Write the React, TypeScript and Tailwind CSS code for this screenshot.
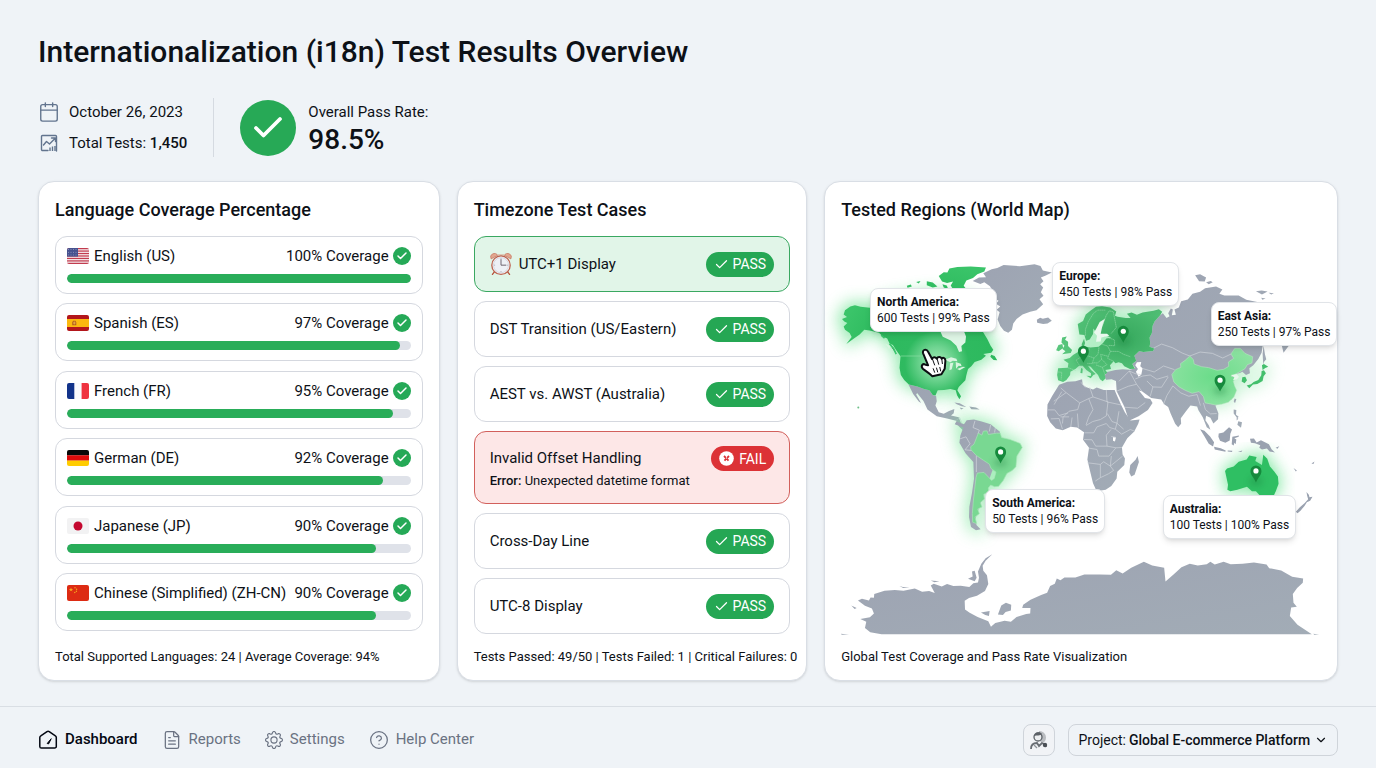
import React from 'react';
import { Calendar, Check, ChevronDown, CircleHelp, FileText } from 'lucide-react';
import { BsGear } from 'react-icons/bs';

interface Language {
  name: string;
  code: string;
  coverage: number;
}

interface TestCase {
  name: string;
  passed: boolean;
  active?: boolean;
  error?: string;
}

interface Region {
  name: string;
  stats: string;
  position: string;
}

const LANGUAGES: Language[] = [
  { name: 'English (US)', code: 'us', coverage: 100 },
  { name: 'Spanish (ES)', code: 'es', coverage: 97 },
  { name: 'French (FR)', code: 'fr', coverage: 95 },
  { name: 'German (DE)', code: 'de', coverage: 92 },
  { name: 'Japanese (JP)', code: 'jp', coverage: 90 },
  { name: 'Chinese (Simplified) (ZH-CN)', code: 'cn', coverage: 90 },
];

const TEST_CASES: TestCase[] = [
  { name: 'UTC+1 Display', passed: true, active: true },
  { name: 'DST Transition (US/Eastern)', passed: true },
  { name: 'AEST vs. AWST (Australia)', passed: true },
  { name: 'Invalid Offset Handling', passed: false, error: 'Unexpected datetime format' },
  { name: 'Cross-Day Line', passed: true },
  { name: 'UTC-8 Display', passed: true },
];

const REGIONS: Region[] = [
  { name: 'North America:', stats: '600 Tests | 99% Pass', position: 'left-[6%] top-[13%]' },
  { name: 'Europe:', stats: '450 Tests | 98% Pass', position: 'left-[44%] top-[6.5%]' },
  { name: 'East Asia:', stats: '250 Tests | 97% Pass', position: 'left-[77%] top-[16.5%]' },
  { name: 'South America:', stats: '50 Tests | 96% Pass', position: 'left-[30%] top-[63.5%]' },
  { name: 'Australia:', stats: '100 Tests | 100% Pass', position: 'left-[67%] top-[65%]' },
];

const Flag: React.FC<{ code: string }> = ({ code }) => (
  <svg viewBox="0 0 22 16" className="h-4 w-[22px] shrink-0 overflow-hidden rounded-xs" aria-hidden="true">
    {code === 'us' && (
      <>
        <rect width="22" height="16" fill="#f6eef0" />
        {[0, 1, 2, 3, 4, 5, 6].map((i) => (
          <rect key={i} y={i * 2.46} width="22" height="1.23" fill="#c23b4e" />
        ))}
        <rect width="11" height="8.6" fill="#46528f" />
        {[1.5, 4.2, 6.9].map((y) =>
          [1.5, 4, 6.5, 9].map((x) => <circle key={`${x}-${y}`} cx={x} cy={y} r="0.45" fill="#c9cde4" />)
        )}
      </>
    )}
    {code === 'es' && (
      <>
        <rect width="22" height="16" fill="#b3161b" />
        <rect y="4" width="22" height="8" fill="#fbb80f" />
        <path d="M5.200 10.300V7.500l.8-1.800h2.500l.8 1.800v2.800z" fill="#b5601f" />
        <path d="M7.300 6.500v3M6 8h2.600" stroke="#f6c24b" strokeWidth="0.7" />
      </>
    )}
    {code === 'fr' && (
      <>
        <rect width="22" height="16" fill="#fbfbfd" />
        <rect width="7.3" height="16" fill="#12338a" />
        <rect x="14.6" width="7.4" height="16" fill="#ef3340" />
      </>
    )}
    {code === 'de' && (
      <>
        <rect width="22" height="5.4" fill="#080808" />
        <rect y="5.3" width="22" height="5.4" fill="#dd0b0b" />
        <rect y="10.6" width="22" height="5.4" fill="#ffcc00" />
      </>
    )}
    {code === 'jp' && (
      <>
        <rect width="22" height="16" fill="#f2f2f3" />
        <circle cx="11" cy="8" r="4.5" fill="#c4082f" />
      </>
    )}
    {code === 'cn' && (
      <>
        <rect width="22" height="16" fill="#dd2b13" />
        <path d="M4 2.4l.6 1.5h1.6L4.900 4.900l.5 1.600L4 5.600 2.600 6.500l.5-1.600L1.800 3.900h1.600z" fill="#f7a71c" />
        <circle cx="8" cy="2.700" r="0.7" fill="#f7a71c" />
        <circle cx="9.600" cy="4.300" r="0.7" fill="#f7a71c" />
        <circle cx="9.400" cy="6.300" r="0.7" fill="#f7a71c" />
        <circle cx="7.800" cy="7.500" r="0.7" fill="#f7a71c" />
      </>
    )}
  </svg>
);

const AlarmClock: React.FC = () => (
  <svg viewBox="0 0 66 70" className="h-[23px] w-[22px] shrink-0" aria-hidden="true">
    <path d="M14 56l-7 9M52 56l7 9" stroke="#b5523c" strokeWidth="4" strokeLinecap="round" />
    <path d="M3 18a11 11 0 0 1 20-11z" fill="#e2a68f" stroke="#c4735b" strokeWidth="2" />
    <path d="M63 18A11 11 0 0 0 43 7z" fill="#e2a68f" stroke="#c4735b" strokeWidth="2" />
    <path d="M23 6h20" stroke="#d6a58c" strokeWidth="3" />
    <circle cx="33" cy="37" r="28" fill="#f3f4f8" stroke="#bd6350" strokeWidth="4" />
    <circle cx="33" cy="37" r="23" fill="#eef0f6" stroke="#c9cbd6" strokeWidth="2" />
    <path d="M33 19v18h16" fill="none" stroke="#6d6470" strokeWidth="3" />
    <path d="M33 16v3M33 55v3M12 37h3M51 37h3" stroke="#8c8a96" strokeWidth="2" />
  </svg>
);

const ChartIcon: React.FC = () => (
  <svg viewBox="0 0 20 20" className="size-5 text-slate-500" fill="none" stroke="currentColor" strokeWidth="1.4" aria-hidden="true">
    <path d="M9 17.500H3.500a1 1 0 0 1-1-1v-13a1 1 0 0 1 1-1h13a1 1 0 0 1 1 1V18" strokeLinecap="round" />
    <path d="M4.500 12l3-3.500 3 2.500 5.500-5.500M12.500 5H16.500v3.500" strokeLinecap="round" strokeLinejoin="round" />
    <path d="M11 14.500v3.500M13.500 13.500V18M16 13v5" />
  </svg>
);

const DashboardIcon: React.FC = () => (
  <svg viewBox="0 0 20 20" className="size-5" fill="none" stroke="currentColor" strokeWidth="1.500" strokeLinejoin="round" aria-hidden="true">
    <path d="M1.800 7.600a2 2 0 0 1 1-1.700l6.200-4.300a2 2 0 0 1 2.200 0l6.200 4.300a2 2 0 0 1 .9 1.700v8.800a1.600 1.600 0 0 1-1.600 1.600H3.400a1.600 1.600 0 0 1-1.600-1.600z" />
    <path d="M9.200 13.500l4-4.800-2.600 5.200z" fill="currentColor" strokeWidth="1" />
  </svg>
);

const AvatarIcon: React.FC = () => (
  <svg viewBox="0 0 24 24" className="size-6" aria-hidden="true">
    <path d="M12 3a6.500 6.500 0 0 1 7 6.500c0 3-1.500 5-4 5.500l-3-3z" fill="#b9bcc0" />
    <path d="M4 21c0-4 2.500-6 6-6l2 3 3-3c2 .5 3.500 2 4 4" fill="none" stroke="#686d73" strokeWidth="1.800" />
    <circle cx="11" cy="9" r="4" fill="#eceef0" stroke="#5c6167" strokeWidth="1.300" />
    <path d="M7 8c1-4 6-5 8-2-2 2-5 1-8 2z" fill="#5c6167" />
    <path d="M7 17l3 3" stroke="#8b9096" strokeWidth="1.300" />
    <circle cx="18" cy="17" r="2.200" fill="#4b5056" />
  </svg>
);

// Coastlines are drawn at three units per map pixel, each in its own local frame
const NORTH_AMERICA =
  'M15 208L30 202 20 194 24 181 40 170 54 166 71 171 98 174 170 150 230 142 300 134 350 140 400 150 430 205 440 248 452 268 462 288 470 300 464 309 440 313 448 318 434 330 414 337 404 350 394 358 389 377 386 392 366 412 362 422 373 440 368 449 361 437 357 422 341 418 322 421 303 422 296 438 288 436 278 422 262 418 242 411 216 405 202 391 192 376 188 354 191 320 177 300 168 286 158 281 151 266 139 261 126 249 98 242 82 240 68 254 53 265 28 283 44 262 38 250 24 240 20 230 31 220 22 215z';
const ARCTIC =
  'M306 78L321 67 332 68 338 56 362 51 402 50 448 53 443 65 422 73 409 84 389 92 381 108 392 122 350 120 342 107 349 95 331 99 316 95zM270 94l18 4 14 12-14 3-18-7zM238 96l13-3-5 8zM210 108l12-4 3 6-13 4zM317 103l13 4 5 11-14-5zM418 309l18 5-7 8-15-1zM464 315l10 4 8 13-11-1-10-10z';
const MEXICO =
  'M215 405L242 411 262 418 278 422 288 436 298 439 300 455 296 468 306 488 321 493 337 484 353 478 351 491 343 498 366 503 375 526 390 540 408 545 402 552 382 545 366 530 358 514 331 507 300 500 272 480 260 454 241 430 238 435 253 460 246 456 229 433z';
const CARIBBEAN =
  'M353 459l16 2 20 11-14-2-15-6zM398 471l20 3 11 6-25-1zM369 474l12 3-8 3z';
const GREENLAND =
  'M-54 93L-35 83-14 82-22 70 3 58 20 54 39 45 88 49 132 43 150 48 157 62 184 68 166 77 151 83 159 94 149 103 158 113 151 127 159 138 147 148 158 163 138 181 119 186 96 194 78 208 68 221 64 240 53 249 40 243 29 229 21 209 27 187 18 180 29 170 16 162 24 153 9 145 7 126-2 109-19 97-31 102z';
const EUROPE =
  'M262 223L278 214 286 194 302 181 317 171 335 169 360 173 378 185 374 198 382 201 406 205 421 205 410 192 424 188 440 195 457 188 490 183 506 178 516 186 510 196 493 215 487 229 485 250 478 263 480 280 478 291 492 296 489 304 459 307 447 304 432 318 438 333 426 343 434 357 419 358 402 350 395 341 385 338 375 341 370 335 359 347 362 358 345 361 351 369 343 375 346 386 337 395 329 389 323 376 311 363 301 351 293 348 302 361 316 373 309 376 301 386 302 371 288 361 277 348 266 348 255 358 240 366 239 376 228 391 218 397 203 392 200 376 203 356 232 354 234 341 219 330 238 325 248 316 264 306 274 297 274 283 281 267 284 280 281 290 300 293 325 291 338 280 348 266 363 263 348 258 335 262 318 249 309 236 308 253 298 269 287 273 282 256 267 254z';
const BRITAIN =
  'M215 263L229 260 224 270 233 276 233 289 245 301 241 310 215 314 225 305 216 298 222 288 213 278zM204 286l12-3 2 12-13 10-8-3zM288 378l15 1-2 7zM272 355l5 2-1 14-6-1z';
const AFRICA =
  'M386 -45L411 -54 435 -55 455 -61 457 -45 468 -37 488 -30 499 -36 520 -29 553 -29 557 -19 573 17 584 39 601 63 628 60 624 73 612 96 591 116 575 144 577 165 584 177 582 197 561 217 559 237 543 260 526 271 499 276 488 252 479 215 471 180 476 145 458 121 461 98 440 84 421 82 397 92 376 87 359 68 350 49 351 15 365 -11z';
const ASIA =
  'M-130 367L-105 361-83 359-61 360-45 356-54 343-46 337-42 333-48 318-33 304-21 307 9 304 12 296-2 291 0 280-2 263 5 250 7 229 13 215 30 196 38 190 49 205 58 199 54 190 62 176 68 179 65 196 77 195 73 179 86 173 93 154 113 149 127 132 150 126 165 115 198 110 217 119 208 132 223 137 266 137 289 150 340 160 380 180 420 220 440 262 415 290 401 309 396 289 360 282 338 289 335 309 325 328 310 347 298 356 300 371 288 376 277 366 270 370 245 375 262 385 245 395 258 425 245 450 215 462 196 468 205 491 204 509 190 522 181 505 168 499 166 512 176 527 181 541 170 533 158 503 145 482 141 471 121 468 107 486 92 506 93 523 84 533 75 523 61 491 54 472 42 464 33 450 3 445-25 425-34 423-16 445 0 448 7 460-7 481-35 500-64 514-77 473-101 425-103 394-116 389-133 390-137 378z';
const CHINA =
  'M65 375L76 360 92 353 91 342 105 332 119 319 130 330 132 343 154 351 176 354 201 362 221 359 236 350 235 337 251 326 243 313 254 296 271 296 285 311 308 321 306 340 292 345 285 357 270 366 251 376 244 380 261 383 250 395 254 409 260 422 252 442 235 458 215 464 195 466 181 463 165 460 160 441 147 426 126 431 105 422 87 412 71 397z';
const JAPAN =
  'M290 408L303 404 311 397 325 391 334 377 335 364 342 362 348 371 341 380 338 394 322 403 309 405 298 416zM336 347l6-4 13 8-9 4-8 6zM277 383l9-2 5 11-7 9-9-5z';
const ASIA_ISLANDS =
  'M135 76l15-3 18 10-4 12-17-1zM168 97l14-4 6 4-12 6zM318 124l17-2 18 3-17 9zM356 129l16 1-8 4zM334 144l13 2-10 4zM341 288l4 26 4 15-7 8-2 10-2-35zM254 447l5 2-4 12-4-6zM251 480l8 1-1 15 8 6-4 4-11-14zM265 515l11 3-3 17-11-9zM260 503l5 5-5 5z';
const OCEANIA =
  'M210 89L223 94 240 111 252 128 249 141 236 133 223 110zM252 142l20 4 15 7-1 4-32-7zM266 102l14-3 17-16 9 7-5 13-2 20-13 7-16-6-5-12zM307 112l20-4-1 4-13 4 6 4-2 14-4-4-2 8-6-4zM293 153l14 1-1 4-13-2zM324 157l13-4-3 5zM360 118l12-1 8 12 13-7 24 12 8 15 10 10-16-3-8-9-15 3-8-5 3-8-16-6-12-1zM437 145l11-5-5 8zM466 148l8 5zM476 158l6 6zM491 206l10 7-3 3zM545 192l9-6-3 8zM530 278l7 8 2 8 9-2-7 12-10 5-7 11-12 14-9 8-5-5 12-13 14-12 11-12-3-11z';
const AUSTRALIA =
  'M285 215L291 207 311 201 326 187 339 183 350 180 358 168 380 173 376 185 396 197 400 166 412 178 420 201 433 216 444 231 446 253 438 275 431 290 412 293 391 290 378 276 366 276 351 262 322 271 301 276 292 271 294 256z';
const SOUTH_AMERICA =
  'M77 66L100 74 108 62 130 60 153 66 180 74 192 84 208 97 207 114 190 200 160 285 140 340 133 363 138 378 150 390 136 393 121 383 115 353 116 322 124 280 130 238 128 188 105 162 86 130 89 108 98 84 88 80 72 74z';
const BRAZIL =
  'M143 101L154 107 158 95 169 94 173 105 198 101 209 101 213 114 238 120 269 132 275 144 259 170 256 202 245 213 229 222 218 243 204 261 192 262 180 257 173 266 175 277 159 285 161 299 149 310 154 323 141 329 146 343 133 353 138 373 126 369 125 343 128 305 132 270 136 235 140 221 160 219 183 243 191 237 196 218 181 207 176 194 159 183 137 168 121 151 120 142 130 134z';
const ANTARCTICA =
  'M63 184L75 179 96 184 101 175 111 176 112 165 143 155 174 153 200 155 234 148 256 158 277 156 294 162 282 139 291 134 315 142 331 135 350 141 372 140 398 144 410 132 424 130 427 116 424 97 434 74 447 57 467 45 447 65 438 80 440 95 451 108 455 135 445 156 421 170 397 177 384 185 385 211 399 221 423 234 455 247 463 263 476 252 504 245 523 248 540 234 569 225 581 223 582 207 557 207 560 197 582 182 614 168 632 161 641 141 655 134 661 118 672 123 684 115 717 115 744 106 790 106 824 107 840 93 859 103 885 86 923 68 948 79 984 86 988 127 1013 105 1036 84 1061 74 1085 79 1112 75 1123 68 1136 76 1163 68 1184 75 1220 74 1254 70 1292 76 1300 87 1336 94 1369 113 1402 118 1401 131 1384 147 1371 165 1373 191 1383 203 1366 205 1362 231 1385 257 1428 286 134 286 100 280 84 267 88 248 70 240 99 235 111 223 105 208 84 200zM43 199l16 8-6 3zM12 284l24 3H14zM1433 284l17 3h-15zM394 119l14-7-2-15 8-2 6 21-6 10zM282 124l26 2-15 3zM188 141l10 3 20 1-19 2zM433 220l26-4-2 15-11-3zM484 226l10-27 14-8 16 6-1 17-16 5-8 9z';

const BORDERS =
  'M391 -35L407 -21 370 5M407 -21L448 10 475 -3 488 -8 478 -37M465 -36L452 -52M448 10L442 30 416 35 398 53 396 72M475 -3L488 30 475 53 467 76M488 -8L533 7 528 49 510 60 487 66 467 78M528 -29L530 7 572 16M531 42L545 66 560 71 555 89 538 84 528 72M462 100L490 100 500 82 528 72M461 120L485 121 496 140 530 140 528 107 542 90M530 140L557 145M475 146L500 150 505 170 536 170 557 145 575 144M471 190L510 195 520 187 540 200 543 170M495 245L510 235 510 195M510 235L535 223 550 213 540 200 577 170M555 89L574 104 600 90 613 95M566 35L560 71 580 89M352 31L373 31 386 48 413 40M361 58L386 57 396 89M421 82L425 54M444 84L441 42M394 -24L371 15M390 52L416 52M543 111L556 113';
const EUROPE_BORDERS =
  'M285 258L285 239 294 215 309 191 322 181 345 181M337 225L348 196 357 183 369 186 378 233 362 252M203 367L214 368 212 390M232 354L257 363M266 305L272 322 290 318 297 296M272 322L257 331 267 347M290 318L311 325 323 314 326 292M311 325L306 339 321 340 334 329 331 314 354 320 360 305 352 289 333 283M360 305L384 305 400 314 420 321M334 329L350 345 336 353 317 346M336 353L343 372M350 263L372 270 373 288 354 287M370 335L352 326 354 320M290 341L309 342';

const Pin: React.FC<{ x: number; y: number }> = ({ x, y }) => (
  <g transform={`translate(${x} ${y})`}>
    <ellipse cy="9" rx="7" ry="5" fill="#157a3a" opacity="0.3" filter="url(#pin-shadow)" />
    <path d="M0 10C-2 5-5.500 3-5.500-1.500a5.500 5.500 0 0 1 11 0C5.500 3 2 5 0 10z" fill="#168a3d" />
    <circle cy="-1.500" r="2.600" fill="#fff" />
  </g>
);

const WorldMap: React.FC = () => (
  <svg viewBox="840 236 481 400" className="block w-full overflow-visible" role="img" aria-label="World map of tested regions">
    <defs>
      <filter id="glow" x="-30%" y="-30%" width="160%" height="160%">
        <feGaussianBlur stdDeviation="24" />
      </filter>
      <filter id="pin-shadow" x="-100%" y="-100%" width="300%" height="300%">
        <feGaussianBlur stdDeviation="3" />
      </filter>
      <linearGradient id="land" x1="0" y1="0" x2="1" y2="1">
        <stop offset="0" stopColor="#9da3b2" />
        <stop offset="1" stopColor="#a2acb6" />
      </linearGradient>
      <radialGradient id="america" gradientUnits="userSpaceOnUse" cx="300" cy="340" r="300">
        <stop offset="0" stopColor="#a4e9b5" />
        <stop offset="0.160" stopColor="#6fd491" />
        <stop offset="0.320" stopColor="#2fba60" />
        <stop offset="0.650" stopColor="#2cb95d" />
        <stop offset="1" stopColor="#3ac469" />
      </radialGradient>
      <radialGradient id="europe" cx="0.640" cy="0.400" r="0.600">
        <stop offset="0" stopColor="#37a95e" />
        <stop offset="1" stopColor="#58c67c" />
      </radialGradient>
      <radialGradient id="china" cx="0.500" cy="0.500" r="0.600">
        <stop offset="0" stopColor="#6bdc8a" />
        <stop offset="1" stopColor="#8ee2a2" />
      </radialGradient>
    </defs>

    {/* Halo behind Europe stays under the neighbouring land */}
    <g transform="translate(990 250) scale(0.3333)">
      <path d={EUROPE} fill="#65de8a" stroke="#65de8a" strokeWidth="20" opacity="0.55" filter="url(#glow)" />
    </g>

    <g transform="translate(836 250) scale(0.3333)">
      <path d={NORTH_AMERICA} fill="#5ee087" stroke="#5ee087" strokeWidth="24" opacity="0.65" filter="url(#glow)" />
      <path d={MEXICO + CARIBBEAN} fill="url(#land)" />
      <path d={NORTH_AMERICA + ARCTIC} fill="url(#america)" />
      <path d="M306 235L318 261 342 272 359 288 367 307 376 305 374 289 386 278 388 260 378 235z" fill="#dff6e6" />
      <path d="M192 319H332" stroke="#8be0a5" strokeWidth="2" />
      <path d="M325 330l18-7 16 4 3 8-14-2-7 5zM340 341l10-2-5 20-7 3zM357 337l15 5 3 8-9-2-8 9zM361 358l17-7 8 1-17 10zM145 281l15 8-3 10z" fill="#d8f5e0" />
      <path d="M133 256l10 9M158 282l12 14 8 17" stroke="#3cc66d" strokeWidth="5" />
      <path d="M357 514l12-10 8 21M375 526l17-4" fill="none" stroke="#c5cad3" strokeWidth="1.500" />
      <circle cx="64" cy="474" r="3" fill="#6dbf88" />
    </g>

    <g transform="translate(930 400) scale(0.3333)">
      <path d={BRAZIL + SOUTH_AMERICA} fill="#6fe391" stroke="#6fe391" strokeWidth="20" opacity="0.6" filter="url(#glow)" />
      <path d={SOUTH_AMERICA} fill="url(#land)" />
      <path d="M88 118L106 112 118 133 103 151 123 153M133 64L127 84 146 92 142 103M180 76L176 96M194 86L192 99M137 168L137 218" fill="none" stroke="#d5d9df" strokeWidth="2" />
      <path d={BRAZIL} fill="#79d892" stroke="#a8e6b6" strokeWidth="2" />
      <path d={AFRICA} fill="url(#land)" />
      <path d="M600 197L616 181 622 170 626 188 613 226 603 231 597 219z" fill="url(#land)" />
      <path d={BORDERS} fill="none" stroke="#d0d4db" strokeWidth="2" strokeLinejoin="round" />
      <path d="M548 113l9 1-3 12-6-2z" fill="#fff" />
    </g>

    <g transform="translate(1150 250) scale(0.3333)">
      <path d={CHINA + JAPAN} fill="#78e296" stroke="#78e296" strokeWidth="12" opacity="0.5" filter="url(#glow)" />
      <path d={ASIA + ASIA_ISLANDS} fill="url(#land)" />
      <path d="M-40 338L-27 337-30 350-23 356-27 375-35 381-43 366-37 358-45 347z" fill="#fff" />
      <path d="M9 296L34 283 67 294 96 310 119 319M119 319L150 307 187 311 218 325 243 313M-25 356L12 367 40 349 73 360M-22 379L0 376 20 389 54 379M-94 395L-63 364-45 372-28 375M-63 364L-41 404-25 425M-101 425L-66 410-41 404M0 440L8 412-10 394M8 412L34 413 54 382M40 464L50 438 68 409 92 430 116 440 141 435 151 468M-77 473L-38 476-15 459M160 460L166 480 181 493 200 492M-45 388L-22 379" fill="none" stroke="#d0d4db" strokeWidth="2" strokeLinejoin="round" />
      <path d={CHINA} fill="url(#china)" stroke="#bdeac7" strokeWidth="1.500" />
      <path d="M242 376l18-2 7 7-6 8-12 3 4-9z" fill="#e8f8ec" />
      <path d={JAPAN} fill="#43bf6c" />
    </g>

    <g transform="translate(990 250) scale(0.3333)">
      <path d={GREENLAND} fill="url(#land)" />
      <path d="M139 210l10-6 8 3 16-4 11 10-13 8-13 2-18-4z" fill="url(#land)" />
      <path d={EUROPE + BRITAIN} fill="url(#europe)" />
      <path d="M344 207L328 217 318 236 311 248 320 258 317 276 331 275 333 263 357 258 350 252 331 252 335 233z" fill="#eaf8ee" />
      <path d={EUROPE_BORDERS} fill="none" stroke="#a7e2b8" strokeWidth="1.500" strokeDasharray="5 1" />
    </g>

    <g transform="translate(1130 400) scale(0.3333)">
      <path d={AUSTRALIA} fill="#59e083" stroke="#59e083" strokeWidth="16" opacity="0.7" filter="url(#glow)" />
      <path d={OCEANIA} fill="#9aa2b0" />
      <path d={AUSTRALIA} fill="#2fbf63" />
    </g>

    <g transform="translate(836 540) scale(0.3333)">
      <path d={ANTARCTICA} fill="url(#land)" />
    </g>

    <Pin x={1083} y={353} />
    <Pin x={1123} y={333} />
    <Pin x={1220} y={382} />
    <Pin x={1000} y={454} />
    <Pin x={1256} y={473} />

    {/* Hand cursor over North America */}
    <g transform="translate(836 250) scale(0.3333)">
      <path
        d="M260 311C256 300 270 296 275 306L287 328C289 321 297 321 301 327 304 321 312 320 316 327 320 322 327 325 327 333L325 357 315 374 288 380C280 371 270 366 260 358 252 350 257 340 267 345L275 347z"
        transform="translate(-1 0)"
        fill="#fff"
        stroke="#0c0f12"
        strokeWidth="6"
        strokeLinejoin="round"
      />
      <path d="M287 328l7 19M301 327l5 18M315 327l2 16M289 356l5 13M299 354l4 14M309 352l3 13" stroke="#0c0f12" strokeWidth="3" />
    </g>
  </svg>
);

const PANEL = 'flex min-w-0 flex-col rounded-2xl border border-[#d9dee5] bg-white px-4 pt-4 pb-[13px] shadow-sm';
const NOTE = 'mt-auto text-[13px] leading-5 whitespace-nowrap';

const LanguageRow: React.FC<{ language: Language }> = ({ language }) => (
  <li className="flex flex-col gap-2 rounded-xl border border-[#d5d8df] px-[11px] pt-[9px] pb-[10px]">
    <div className="flex items-center justify-between text-[15px] leading-5 whitespace-nowrap">
      <span className="flex items-center gap-[5px]">
        <Flag code={language.code} />
        {language.name}
      </span>
      <span className="flex items-center gap-1">
        {language.coverage}% Coverage
        <span className="flex size-[18px] items-center justify-center rounded-full bg-[#25a957] text-white">
          <Check size={12} strokeWidth={3} />
        </span>
      </span>
    </div>
    <div
      role="progressbar"
      aria-label={language.name}
      aria-valuenow={language.coverage}
      className="h-[9px] overflow-hidden rounded-full bg-[#dfe2e9]"
    >
      <div className="h-full rounded-full bg-[#29ad59]" style={{ width: `${language.coverage}%` }} />
    </div>
  </li>
);

const StatusBadge: React.FC<{ passed: boolean }> = ({ passed }) =>
  passed ? (
    <span className="flex h-[25px] items-center gap-1 rounded-full bg-[#25a754] px-2 text-sm text-white">
      <Check size={15} strokeWidth={2} />
      PASS
    </span>
  ) : (
    <span className="flex h-[25px] items-center gap-[5px] rounded-full bg-[#dc3236] px-2 text-sm text-white">
      <svg viewBox="0 0 15 15" className="size-[15px]" aria-hidden="true">
        <circle cx="7.500" cy="7.500" r="7.300" fill="#fff" />
        <path d="M5 5l5 5M10 5l-5 5" stroke="#dc3236" strokeWidth="1.800" strokeDasharray="2.600 1.200" />
      </svg>
      FAIL
    </span>
  );

const TestCaseRow: React.FC<{ test: TestCase }> = ({ test }) => {
  const tone = !test.passed
    ? 'h-[73px] items-start border-[#d2605c] bg-[#fde7e7] pt-[14px]'
    : test.active
      ? 'h-14 items-center border-[#3aa861] bg-[#e1f5e8]'
      : 'h-14 items-center border-[#d5d8df]';

  return (
    <li className={`flex justify-between whitespace-nowrap rounded-xl border px-[15px] ${tone}`}>
      <div>
        <div className="flex items-center gap-[7px] text-[15px] leading-6">
          {test.active && <AlarmClock />}
          {test.name}
        </div>
        {test.error && (
          <p className="text-[13px] leading-[22px]">
            <span className="font-medium">Error:</span> {test.error}
          </p>
        )}
      </div>
      <StatusBadge passed={test.passed} />
    </li>
  );
};

const App: React.FC = () => {
  return (
    <div className="flex min-h-screen flex-col bg-[#eff3f7] font-[Roboto,sans-serif] text-[#0d1117]">
      <main className="flex flex-1 flex-col px-[38px] pt-8 pb-[25px]">
        <header>
          <h1 className="text-3xl leading-10 font-medium">Internationalization (i18n) Test Results Overview</h1>
          <div className="mt-[26px] flex items-center">
            <div className="flex h-[59px] flex-col justify-between border-r border-[#d5dae1] pr-[26px] text-[15px] leading-7">
              <div className="flex items-center gap-[9px]">
                <Calendar size={22} strokeWidth={1.5} className="text-slate-500" />
                October 26, 2023
              </div>
              <div className="flex items-center gap-[9px]">
                <span className="flex w-[22px] justify-center">
                  <ChartIcon />
                </span>
                <span>
                  Total Tests: <span className="font-medium">1,450</span>
                </span>
              </div>
            </div>
            <div className="ml-[26px] flex size-14 items-center justify-center rounded-full bg-[#27a956] text-white">
              <Check size={36} strokeWidth={2.5} />
            </div>
            <div className="ml-3">
              <p className="text-[15px] leading-6">Overall Pass Rate:</p>
              <p className="text-[28px] leading-8 font-medium">98.5%</p>
            </div>
          </div>
        </header>

        <div className="mt-6 grid flex-1 grid-cols-[401fr_350fr_513fr] gap-[17px]">
          <section className={PANEL}>
            <h2 className="text-lg leading-6 font-medium">Language Coverage Percentage</h2>
            <ul className="mt-[14px] mb-4 flex flex-1 flex-col justify-between gap-2">
              {LANGUAGES.map((language) => (
                <LanguageRow key={language.code} language={language} />
              ))}
            </ul>
            <p className={NOTE}>Total Supported Languages: 24 | Average Coverage: 94%</p>
          </section>

          <section className={PANEL}>
            <h2 className="text-lg leading-6 font-medium">Timezone Test Cases</h2>
            <ul className="mt-[14px] mb-3 flex flex-col gap-[9px]">
              {TEST_CASES.map((test) => (
                <TestCaseRow key={test.name} test={test} />
              ))}
            </ul>
            <p className={NOTE}>Tests Passed: 49/50 | Tests Failed: 1 | Critical Failures: 0</p>
          </section>

          <section className={PANEL}>
            <h2 className="text-lg leading-6 font-medium">Tested Regions (World Map)</h2>
            <div className="relative mt-[14px]">
              <WorldMap />
              {REGIONS.map((region) => (
                <div
                  key={region.name}
                  className={`absolute rounded-lg border border-[#e1e4e8] bg-white px-[6px] py-[5px] text-xs leading-4 whitespace-nowrap shadow-md ${region.position}`}
                >
                  <p className="font-bold">{region.name}</p>
                  <p>{region.stats}</p>
                </div>
              ))}
            </div>
            <p className={NOTE}>Global Test Coverage and Pass Rate Visualization</p>
          </section>
        </div>
      </main>

      <footer className="flex h-[62px] items-center justify-between border-t border-[#d9dee4] px-[38px] pt-1">
        <nav className="flex items-center gap-6 text-[15px] text-gray-500">
          <a href="#dashboard" className="flex items-center gap-[7px] font-medium text-gray-950">
            <DashboardIcon />
            Dashboard
          </a>
          <a href="#reports" className="flex items-center gap-[7px]">
            <FileText size={20} strokeWidth={1.5} />
            Reports
          </a>
          <a href="#settings" className="flex items-center gap-[7px]">
            <BsGear size={18} />
            Settings
          </a>
          <a href="#help" className="flex items-center gap-[7px]">
            <CircleHelp size={20} strokeWidth={1.5} />
            Help Center
          </a>
        </nav>
        <div className="flex items-center gap-[13px]">
          <button
            type="button"
            aria-label="Account"
            className="flex size-8 items-center justify-center rounded-lg border border-[#cfd4da] bg-[#f1f3f6]"
          >
            <AvatarIcon />
          </button>
          <div className="relative flex h-8 items-center rounded-lg border border-[#cfd4da] pl-[10px] text-sm">
            <label htmlFor="project">Project:</label>
            <select id="project" className="h-full appearance-none bg-transparent pr-[26px] pl-[3px] font-medium outline-none">
              <option>Global E-commerce Platform</option>
            </select>
            <ChevronDown size={14} className="pointer-events-none absolute right-[9px]" />
          </div>
        </div>
      </footer>
    </div>
  );
};

export default App;
